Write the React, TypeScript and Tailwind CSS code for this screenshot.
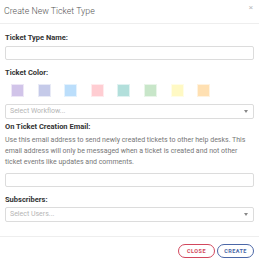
const swatches = [
  "bg-[#d1c4e9]",
  "bg-[#c5cae9]",
  "bg-[#bbdefb]",
  "bg-[#ffcdd2]",
  "bg-[#b2dfdb]",
  "bg-[#c8e6c9]",
  "bg-[#fff9c4]",
  "bg-[#ffe0b2]",
];

function Select({ placeholder }: { placeholder: string }) {
  return (
    <div className="flex h-[15px] items-center justify-between rounded-[2px] border border-[#dcdcdc] bg-white pl-[4px] pr-[5px]">
      <span className="text-[7px] text-[#b5b5b5]">{placeholder}</span>
      <span className="h-0 w-0 border-x-[2.5px] border-t-[3px] border-x-transparent border-t-[#888]" />
    </div>
  );
}

export default function App() {
  return (
    <div className="h-[260px] w-[259px] bg-white font-['Roboto',sans-serif]">
      <div className="flex h-[24px] items-center justify-between border-b border-[#eeeeee] pl-[4px] pr-[6px]">
        <span className="text-[8.8px] font-light text-[#555]">Create New Ticket Type</span>
        <span className="-mt-[8px] text-[8px] leading-none text-[#bbb]">×</span>
      </div>

      <div className="px-[5px] pt-[8px]">
        <div className="text-[7.5px] font-bold text-[#333]">Ticket Type Name:</div>
        <div className="mt-[3px] h-[14px] rounded-[2px] border border-[#dcdcdc]" />

        <div className="mt-[7px] text-[7.5px] font-bold text-[#333]">Ticket Color:</div>
        <div className="mt-[5px] flex gap-[13.6px] pl-[6px]">
          {swatches.map((c) => (
            <div key={c} className={`h-[13px] w-[13px] border border-white/60 ${c}`} />
          ))}
        </div>

        <div className="mt-[7px]">
          <Select placeholder="Select Workflow..." />
        </div>

        <div className="mt-[2px] text-[7.5px] font-bold text-[#333]">On Ticket Creation Email:</div>
        <p className="mt-[3px] text-[7px] leading-[11px] text-[#777]">
          Use this email address to send newly created tickets to other help desks. This email
          address will only be messaged when a ticket is created and not other ticket events like
          updates and comments.
        </p>
        <div className="mt-[5px] h-[14px] rounded-[2px] border border-[#dcdcdc]" />

        <div className="mt-[7px] text-[7.5px] font-bold text-[#333]">Subscribers:</div>
        <div className="mt-[2px]">
          <Select placeholder="Select Users..." />
        </div>
      </div>

      <div className="mt-[14px] flex justify-end gap-[2px] border-t border-[#eeeeee] pr-[5px] pt-[7px]">
        <button className="h-[14px] w-[37px] rounded-full border border-[#d2475d] text-[5.5px] font-bold tracking-[0.08em] text-[#d2475d]">
          CLOSE
        </button>
        <button className="h-[14px] w-[37px] rounded-full border border-[#4b67a7] text-[5.5px] font-bold tracking-[0.08em] text-[#4b67a7]">
          CREATE
        </button>
      </div>
    </div>
  );
}
